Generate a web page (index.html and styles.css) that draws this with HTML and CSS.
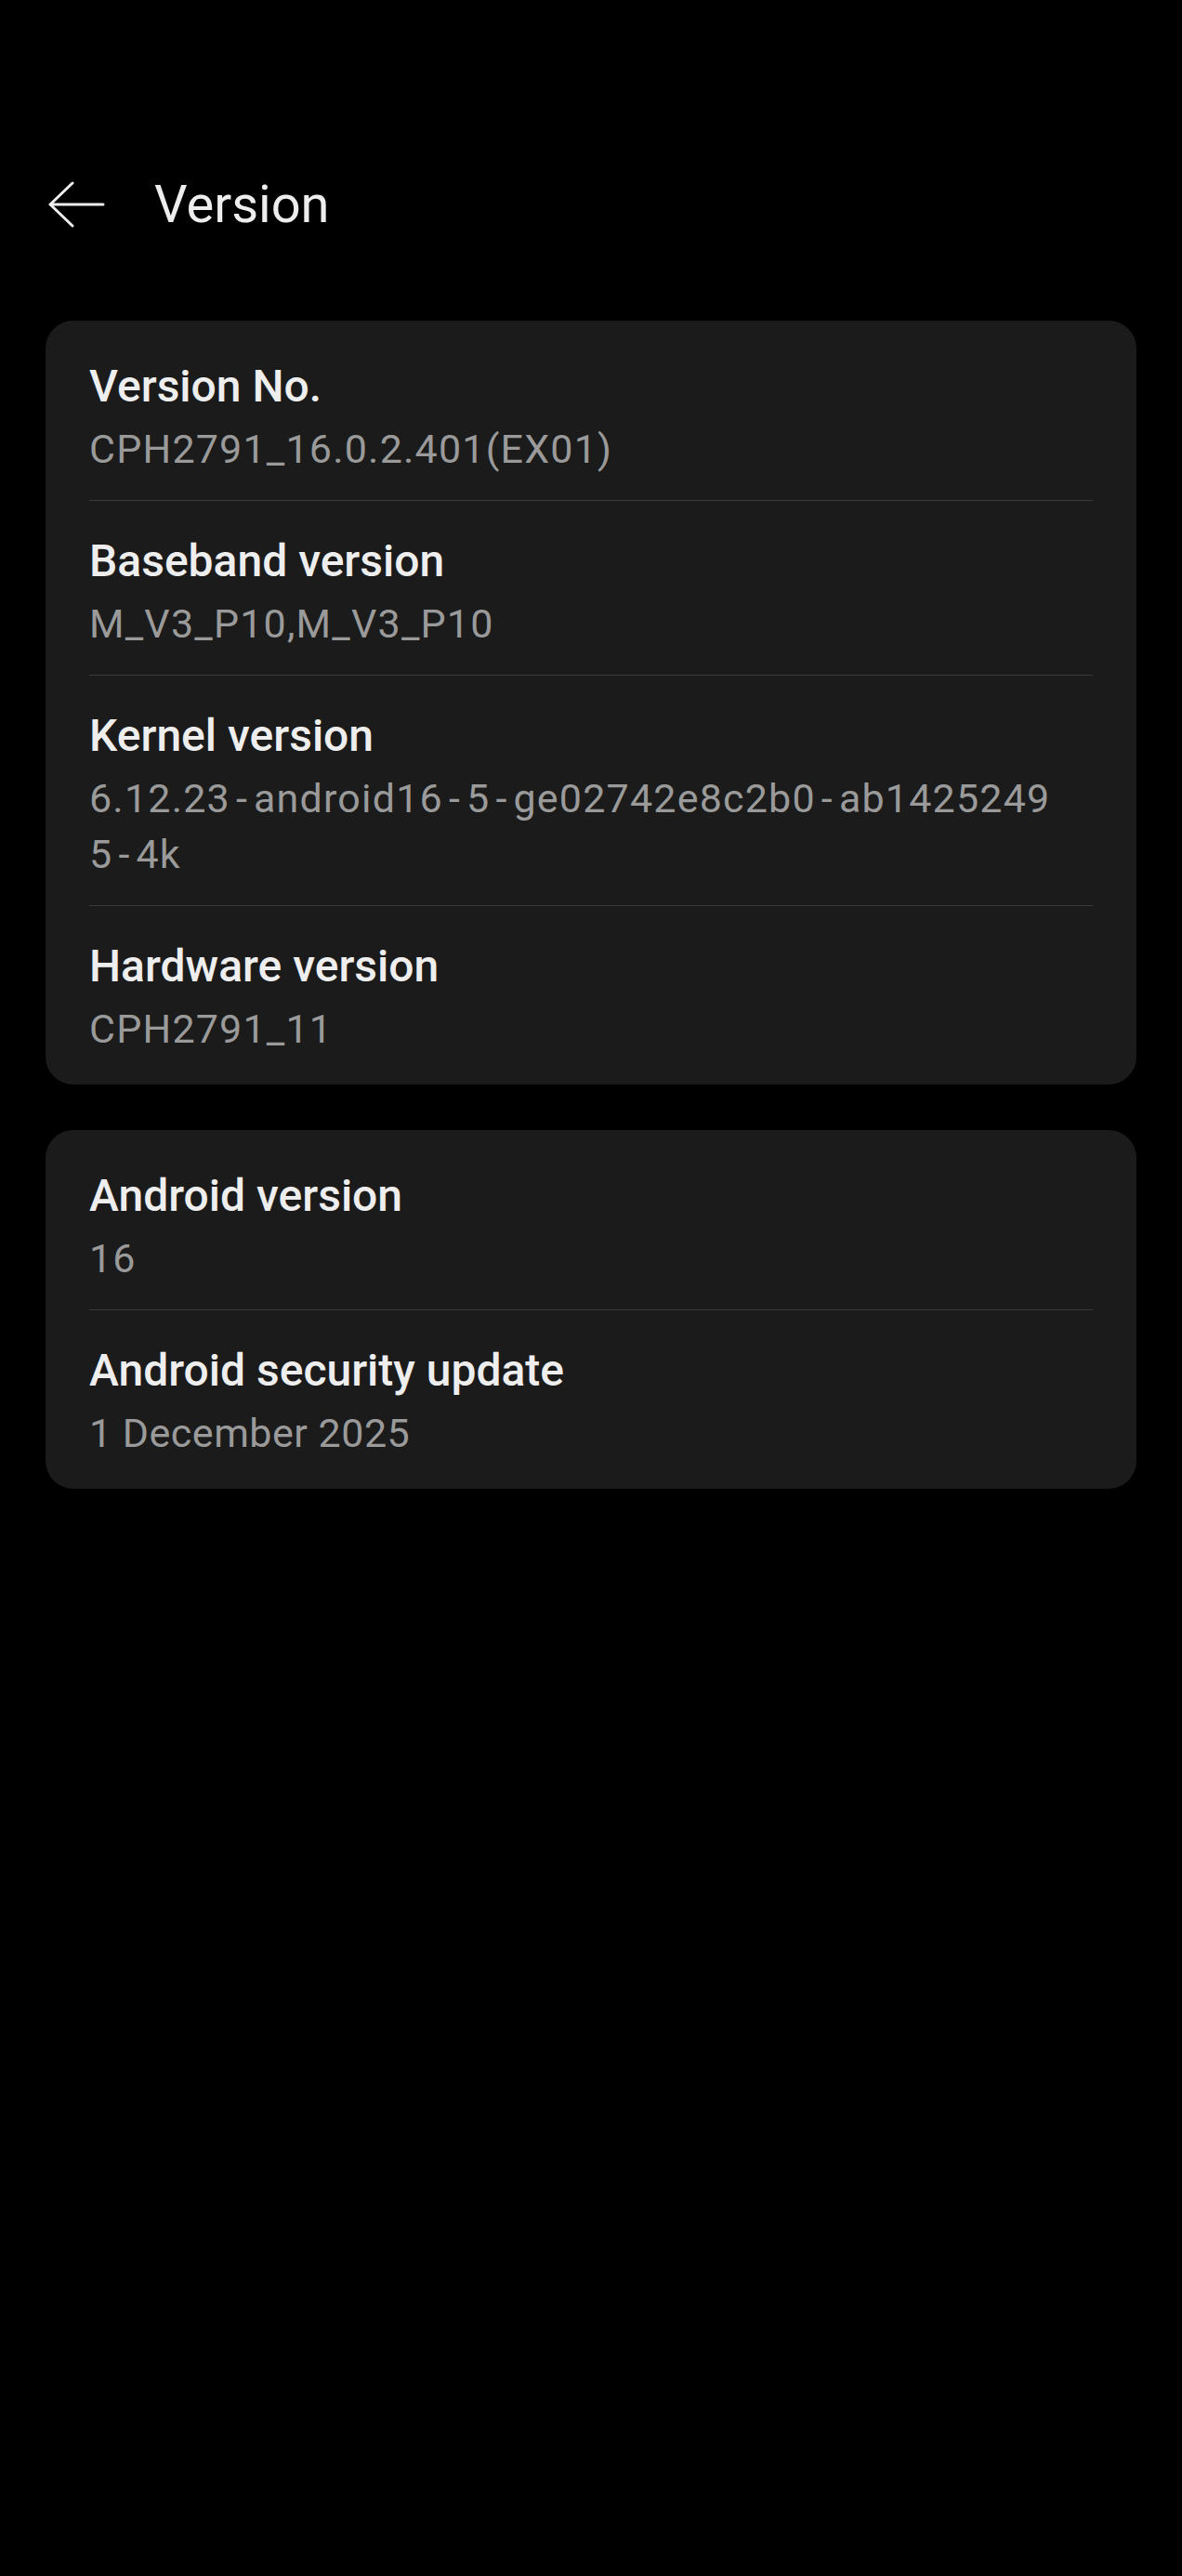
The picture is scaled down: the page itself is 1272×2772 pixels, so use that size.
FILE: index.html
```html
<!DOCTYPE html>
<html lang="en">
<head>
<meta charset="utf-8">
<title>Version</title>
<link rel="stylesheet" href="styles.css">
</head>
<body>
<div class="page">
  <header class="topbar">
    <svg class="back" width="62" height="50" viewBox="0 0 62 50" aria-hidden="true">
      <path d="M60 25 H3 M27 2 L3 25 L27 48" fill="none" stroke="#ededed" stroke-width="3" stroke-linecap="round" stroke-linejoin="round"/>
    </svg>
    <h1 class="title">Version</h1>
  </header>

  <section class="card">
    <div class="row">
      <div class="row-title">Version No.</div>
      <div class="row-value">CPH2791_16.0.2.401(EX01)</div>
    </div>
    <div class="row">
      <div class="row-title">Baseband version</div>
      <div class="row-value">M_V3_P10,M_V3_P10</div>
    </div>
    <div class="row">
      <div class="row-title">Kernel version</div>
      <div class="row-value">6.12.23<span class="dash">-</span>android16<span class="dash">-</span>5<span class="dash">-</span>ge02742e8c2b0<span class="dash">-</span>ab1425249<br>5<span class="dash">-</span>4k</div>
    </div>
    <div class="row">
      <div class="row-title">Hardware version</div>
      <div class="row-value">CPH2791_11</div>
    </div>
  </section>

  <section class="card">
    <div class="row">
      <div class="row-title">Android version</div>
      <div class="row-value">16</div>
    </div>
    <div class="row">
      <div class="row-title">Android security update</div>
      <div class="row-value date">1 December 2025</div>
    </div>
  </section>
</div>
</body>
</html>
```

FILE: styles.css
```css
html {
  background: #000;
}
body {
  margin: 0;
  background: #000;
  font-family: Roboto, "Noto Sans", "Liberation Sans", sans-serif;
  color: #ededed;
}
.page {
  min-height: 2772px;
  padding: 180px 49px 0 49px;
  box-sizing: border-box;
}
.topbar {
  display: flex;
  align-items: center;
  height: 80px;
  padding-left: 2px;
  gap: 53px;
  margin-bottom: 85px;
}
.back {
  display: block;
  flex: none;
}
.title {
  margin: 0;
  font-size: 56px;
  line-height: 56px;
  font-weight: 400;
  color: #ededed;
}
.card {
  background: #1b1b1b;
  border-radius: 30px;
  padding: 6px 47px 5px 47px;
  margin-bottom: 49px;
}
.row {
  padding: 35px 0 25px 0;
  border-bottom: 1px solid #383838;
}
.row:last-child {
  border-bottom: none;
}
.row-title {
  font-size: 48px;
  line-height: 60px;
  font-weight: 500;
  color: #eeeeee;
}
.row-value {
  margin-top: 7px;
  font-size: 43px;
  line-height: 60px;
  font-weight: 400;
  letter-spacing: 1.2px;
  color: #9a9a9a;
}
.row-value.date {
  letter-spacing: 0.5px;
}
.dash {
  margin: 0 6px;
}
```
